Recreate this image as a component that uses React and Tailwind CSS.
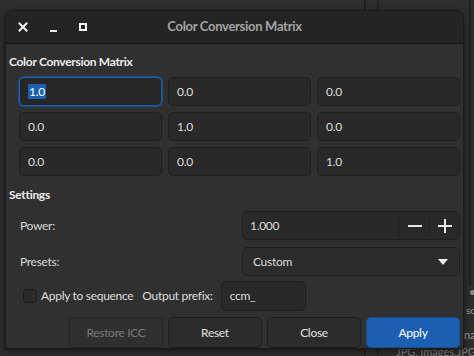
import React from "react";

function Field({ value, focused }) {
  return (
    <div
      className={
        "h-[29px] rounded-[5px] flex items-center pl-[8px] text-[12px] text-[#dedede] " +
        (focused
          ? "bg-[#262626] border border-[#1d5ea8] shadow-[0_0_0_1px_#1a4f8a]"
          : "bg-[#292929] border border-[#1f1f1f]")
      }
    >
      {focused ? (
        <span className="bg-[#1b5fb0] text-white px-[1px] leading-[15px]">{value}</span>
      ) : (
        <span>{value}</span>
      )}
    </div>
  );
}

function Btn({ children, disabled, primary }) {
  return (
    <div
      className={
        "w-[95px] h-[31px] rounded-[5px] flex items-center justify-center text-[12px] " +
        (primary
          ? "bg-[#1c5fb2] text-white border border-[#17508f]"
          : disabled
          ? "bg-[#2f2f2f] text-[#7a7a7a] border border-[#232323]"
          : "bg-[#2c2c2c] text-[#e2e2e2] border border-[#1e1e1e]")
      }
    >
      {children}
    </div>
  );
}

export default function App() {
  return (
    <div
      className="relative w-[474px] h-[356px] bg-[#2d2d2d] overflow-hidden"
      style={{ fontFamily: 'Lato, "Noto Sans", sans-serif' }}
    >
      {/* background window content */}
      <div className="absolute left-[364px] top-0 w-[2px] h-[356px] bg-[#202020]" />
      <div className="absolute left-[377px] top-0 w-[2px] h-[356px] bg-[#222222]" />
      <div className="absolute left-[469px] top-0 w-[2px] h-[286px] bg-[#1f1f1f]" />
      <div className="absolute left-[470px] top-[290px] w-[5px] h-[5px] rounded-full bg-[#8a8a8a]" />
      <div className="absolute left-[466px] top-[305px] text-[10px] leading-[11px] text-[#9a9a9a]">sc</div>
      <div className="absolute left-[464px] top-[329px] text-[11px] leading-[12px] text-[#9a9a9a]">na</div>
      <div className="absolute left-[396px] top-[346px] text-[11px] leading-[12px] text-[#7e7e7e] whitespace-nowrap">
        JPG, images.JPG
      </div>

      {/* dialog */}
      <div className="absolute left-[5px] top-[10px] w-[459px] h-[339px] rounded-t-[8px] overflow-hidden border border-[#1a1a1a] bg-[#303030] flex flex-col shadow-[0_2px_6px_rgba(0,0,0,0.5)]">
        <div className="relative h-[33px] shrink-0 bg-[#242424] border-b border-[#161616] flex items-center">
          <div className="relative z-10 flex items-center pl-[12px] text-white">
            <svg width="10" height="10" viewBox="0 0 10 10">
              <path d="M1.5 1.5 L8.5 8.5 M8.5 1.5 L1.5 8.5" stroke="#f2f2f2" strokeWidth="2" strokeLinecap="square" />
            </svg>
            <div className="ml-[22px] mt-[7px] w-[7px] h-[2px] bg-[#e8e8e8]" />
            <div className="ml-[22px] w-[8px] h-[8px] border-2 border-[#f0f0f0]" />
          </div>
          <div className="absolute inset-0 flex items-center justify-center text-[13px] tracking-[-0.3px] font-bold text-[#a3a3a3]">
            Color Conversion Matrix
          </div>
        </div>

        <div className="flex flex-col pl-[3px] pr-[3px] tracking-[-0.3px]">
          <div className="mt-[10px] h-[16px] leading-[16px] text-[12px] font-bold text-[#ececec]">
            Color Conversion Matrix
          </div>
          <div className="mt-[7px] ml-[10px] grid grid-cols-3 gap-x-[6px] gap-y-[6px]">
            <Field value="1.0" focused />
            <Field value="0.0" />
            <Field value="0.0" />
            <Field value="0.0" />
            <Field value="1.0" />
            <Field value="0.0" />
            <Field value="0.0" />
            <Field value="0.0" />
            <Field value="1.0" />
          </div>

          <div className="mt-[11px] h-[16px] leading-[16px] text-[12px] font-bold text-[#ececec]">Settings</div>

          <div className="mt-[8px] ml-[11px] flex items-center justify-between h-[29px]">
            <div className="text-[12px] text-[#d8d8d8]">Power:</div>
            <div className="w-[218px] h-[29px] rounded-[5px] bg-[#292929] border border-[#1f1f1f] flex items-stretch">
              <div className="flex-1 flex items-center pl-[7px] text-[12px] text-[#dedede]">1.000</div>
              <div className="w-[30px] border-l border-[#242424] flex items-center justify-center">
                <div className="w-[14px] h-[2px] bg-[#e4e4e4]" />
              </div>
              <div className="w-[30px] border-l border-[#242424] flex items-center justify-center">
                <svg width="14" height="14" viewBox="0 0 14 14">
                  <path d="M7 0 V14 M0 7 H14" stroke="#e8e8e8" strokeWidth="2" />
                </svg>
              </div>
            </div>
          </div>

          <div className="mt-[7px] ml-[11px] flex items-center justify-between h-[29px]">
            <div className="text-[12px] text-[#d8d8d8]">Presets:</div>
            <div className="w-[218px] h-[29px] rounded-[5px] bg-[#2b2b2b] border border-[#1f1f1f] flex items-center justify-between pl-[10px] pr-[11px]">
              <div className="text-[12px] text-[#dcdcdc]">Custom</div>
              <svg width="10" height="6" viewBox="0 0 10 6">
                <path d="M0 0 H10 L5 6 Z" fill="#f0f0f0" />
              </svg>
            </div>
          </div>

          <div className="mt-[5px] ml-[14px] flex items-center h-[30px]">
            <div className="w-[14px] h-[14px] rounded-[3px] bg-[#2a2a2a] border border-[#1c1c1c]" />
            <div className="ml-[4px] text-[12px] text-[#dcdcdc]">Apply to sequence</div>
            <div className="ml-[9px] text-[12px] text-[#dcdcdc]">Output prefix:</div>
            <div className="ml-[8px] w-[85px] h-[30px] rounded-[5px] bg-[#292929] border border-[#1f1f1f] flex items-center pl-[8px] text-[12px] text-[#dedede]">
              ccm_
            </div>
          </div>

          <div className="mt-[6px] ml-[60px] flex gap-[5px]">
            <Btn disabled>Restore ICC</Btn>
            <Btn>Reset</Btn>
            <Btn>Close</Btn>
            <Btn primary>Apply</Btn>
          </div>
        </div>
      </div>
    </div>
  );
}
